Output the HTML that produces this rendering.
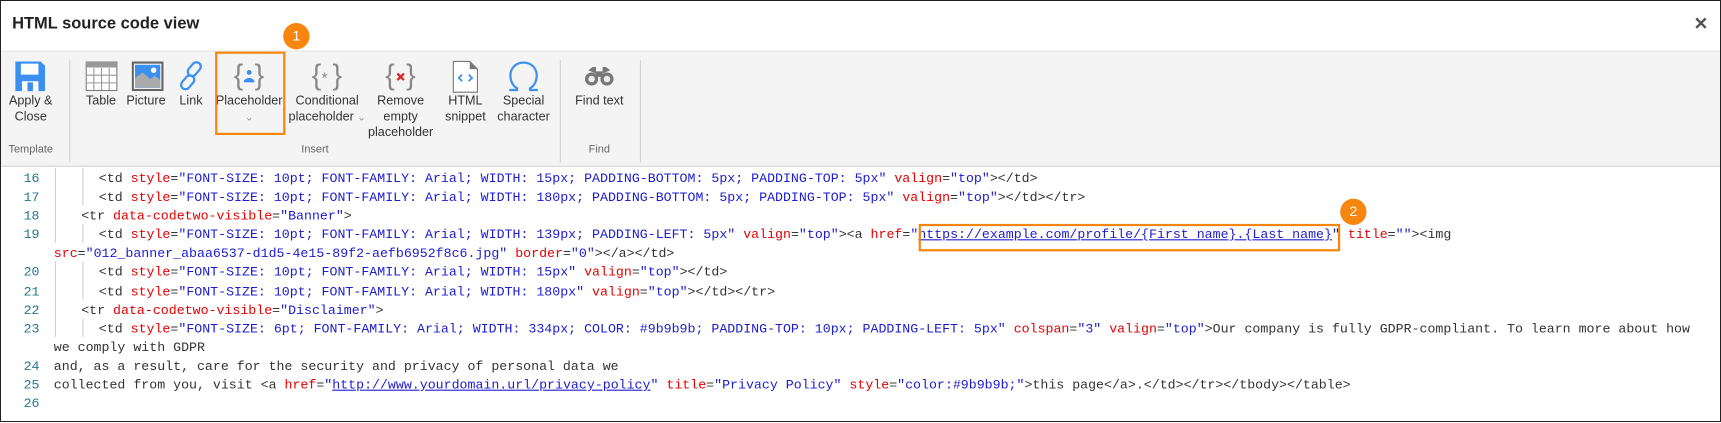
<!DOCTYPE html>
<html><head><meta charset="utf-8"><style>
*{margin:0;padding:0;box-sizing:border-box}
body{width:1721px;height:422px;overflow:hidden;background:#fff;font-family:"Liberation Sans",sans-serif;position:relative}
.wrap{position:absolute;left:0;top:0;width:1568px;height:385px;transform:scale(1.0976);transform-origin:0 0}
.frame{position:absolute;left:0;top:0;width:1721px;height:422px;border:1px solid #222;z-index:5}
.title{position:absolute;left:11px;top:13px;font-size:15px;font-weight:bold;color:#222}
.close{position:absolute;left:1543px;top:12px;font-size:16px;color:#555;font-weight:bold}
.tb{position:absolute;left:1px;top:46px;width:1567px;height:106px;background:#f4f4f4;border-top:1px solid #e6e6e6;border-bottom:1px solid #d6d6d6}
.sep{position:absolute;top:55px;width:1px;height:93px;background:#d0d0d0}
.btn{position:absolute;top:85px;font-size:11.5px;color:#333;text-align:center;line-height:14.5px;transform:translateX(-50%);white-space:nowrap}
.gl{position:absolute;top:131px;font-size:10px;color:#666;transform:translateX(-50%)}
.ic{position:absolute}
.code{position:absolute;left:0;top:153px;font-family:"Liberation Mono",monospace;font-size:12.08px;}
.ln{position:absolute;width:36px;text-align:right;color:#237893;left:0}
.l{position:absolute;white-space:pre;color:#333}
.a{color:#e50000}.v{color:#1c1cd0}.u{text-decoration:underline}
.bar{position:absolute;width:1px;background:#d0d0d0}
.badge{position:absolute;width:24px;height:24px;border-radius:50%;background:#f7860f;color:#fff;font-size:13px;text-align:center;line-height:24px}
.obox{position:absolute;border:2px solid #f7860f}
</style></head><body>
<div class="frame"></div>
<div class="wrap">
<div class="title">HTML source code view</div>
<div class="close">✕</div>
<div class="tb"></div>
<div class="sep" style="left:63px"></div>
<div class="sep" style="left:510px"></div>
<div class="sep" style="left:583px"></div>

<svg class="ic" style="left:13px;top:55px" width="29" height="29" viewBox="0 0 29 29"><path d="M1 1h23l4 4v23H1z" fill="#3b8ff0"/><rect x="6" y="3" width="16" height="10" fill="#fff"/><rect x="7" y="19" width="15" height="9" fill="#fff"/><rect x="12" y="20" width="5" height="8" fill="#3b8ff0"/></svg>
<svg class="ic" style="left:78px;top:56px" width="29" height="27" viewBox="0 0 29 27"><rect x="0.5" y="0.5" width="28" height="26" fill="#fff" stroke="#777"/><rect x="0.5" y="0.5" width="28" height="5" fill="#999"/><path d="M7.5 6v20M14.5 6v20M21.5 6v20M1 12.5h27M1 19.5h27" stroke="#999"/></svg>
<svg class="ic" style="left:120px;top:56px" width="29" height="27" viewBox="0 0 29 27"><rect x="1" y="1" width="27" height="25" fill="#fff" stroke="#666" stroke-width="2"/><rect x="3" y="3" width="23" height="21" fill="#3b8ff0"/><path d="M3 24V15l7-5 7 6 4-3 5 4v7z" fill="#aaa"/><circle cx="20" cy="8" r="2.5" fill="#fff"/></svg>
<svg class="ic" style="left:160px;top:55px" width="28" height="28" viewBox="0 0 28 28" fill="none" stroke="#3b8ff0" stroke-width="2"><rect x="13" y="1" width="8" height="14" rx="4" transform="rotate(40 17 8)"/><rect x="7" y="13" width="8" height="14" rx="4" transform="rotate(40 11 20)"/></svg>
<svg class="ic" style="left:212px;top:55px" width="30" height="30" viewBox="0 0 30 30"><text x="1" y="22" font-family="Liberation Sans" font-size="26" fill="#888">{</text><text x="20" y="22" font-family="Liberation Sans" font-size="26" fill="#888">}</text><circle cx="15" cy="11" r="2.2" fill="#3b8ff0"/><path d="M10 20a5 4 0 0 1 10 0z" fill="#3b8ff0"/></svg>
<svg class="ic" style="left:283px;top:55px" width="30" height="30" viewBox="0 0 30 30"><text x="1" y="22" font-family="Liberation Sans" font-size="26" fill="#888">{</text><text x="20" y="22" font-family="Liberation Sans" font-size="26" fill="#888">}</text><text x="10" y="21" font-family="Liberation Sans" font-size="14" fill="#888">*</text></svg>
<svg class="ic" style="left:350px;top:55px" width="30" height="30" viewBox="0 0 30 30"><text x="1" y="22" font-family="Liberation Sans" font-size="26" fill="#888">{</text><text x="20" y="22" font-family="Liberation Sans" font-size="26" fill="#888">}</text><path d="M12 12l6 6M18 12l-6 6" stroke="#e02020" stroke-width="2"/></svg>
<svg class="ic" style="left:412px;top:55px" width="24" height="30" viewBox="0 0 24 30"><path d="M1 1h15l7 7v21H1z" fill="#fff" stroke="#777"/><path d="M16 1v7h7z" fill="#777"/><path d="M9 13l-3 3 3 3M15 13l3 3-3 3" stroke="#3b8ff0" stroke-width="1.6" fill="none"/></svg>
<svg class="ic" style="left:462px;top:55px" width="30" height="30" viewBox="0 0 30 30" fill="none" stroke="#3b8ff0" stroke-width="2"><path d="M10 26C4 23 3 17 3 14 3 7 8 2 15 2s12 5 12 12c0 3-1 9-7 12"/><path d="M2 27h8M20 27h8"/></svg>
<svg class="ic" style="left:532px;top:60px" width="28" height="18" viewBox="0 0 28 18"><path d="M4 4l4-3h3v6M24 4l-4-3h-3v6" fill="#777"/><rect x="11" y="5" width="6" height="5" fill="#777"/><circle cx="7" cy="12" r="6" fill="#777"/><circle cx="21" cy="12" r="6" fill="#777"/><circle cx="7" cy="12" r="3" fill="#eee"/><circle cx="21" cy="12" r="3" fill="#eee"/></svg>

<div class="btn" style="left:28px">Apply &amp;<br>Close</div>
<div class="btn" style="left:92px">Table</div>
<div class="btn" style="left:133px">Picture</div>
<div class="btn" style="left:174px">Link</div>
<div class="btn" style="left:227px">Placeholder<br><span style="font-size:9px;color:#888">⌄</span></div>
<div class="btn" style="left:298px">Conditional<br>placeholder <span style="font-size:9px;color:#888">⌄</span></div>
<div class="btn" style="left:365px">Remove<br>empty<br>placeholder</div>
<div class="btn" style="left:424px">HTML<br>snippet</div>
<div class="btn" style="left:477px">Special<br>character</div>
<div class="btn" style="left:546px">Find text</div>
<div class="gl" style="left:28px">Template</div>
<div class="gl" style="left:287px">Insert</div>
<div class="gl" style="left:546px">Find</div>
<div class="obox" style="left:196px;top:47px;width:64px;height:76px"></div>
<div class="badge" style="left:258px;top:21px">1</div>

<div class="code">
<div class="bar" style="left:50px;top:0;height:68px"></div>
<div class="bar" style="left:75px;top:0;height:34px"></div>
<div class="bar" style="left:75px;top:51px;height:17px"></div>
<div class="bar" style="left:50px;top:85px;height:52px"></div>
<div class="bar" style="left:75px;top:85px;height:35px"></div>
<div class="bar" style="left:75px;top:137px;height:17px"></div>
<div class="bar" style="left:50px;top:137px;height:17px"></div>

<div class="ln" style="top:3px">16</div>
<div class="l" style="left:90px;top:3px">&lt;td <span class="a">style</span>=<span class="v">"FONT-SIZE: 10pt; FONT-FAMILY: Arial; WIDTH: 15px; PADDING-BOTTOM: 5px; PADDING-TOP: 5px"</span> <span class="a">valign</span>=<span class="v">"top"</span>&gt;&lt;/td&gt;</div>
<div class="ln" style="top:20px">17</div>
<div class="l" style="left:90px;top:20px">&lt;td <span class="a">style</span>=<span class="v">"FONT-SIZE: 10pt; FONT-FAMILY: Arial; WIDTH: 180px; PADDING-BOTTOM: 5px; PADDING-TOP: 5px"</span> <span class="a">valign</span>=<span class="v">"top"</span>&gt;&lt;/td&gt;&lt;/tr&gt;</div>
<div class="ln" style="top:37px">18</div>
<div class="l" style="left:74px;top:37px">&lt;tr <span class="a">data-codetwo-visible</span>=<span class="v">"Banner"</span>&gt;</div>
<div class="ln" style="top:54px">19</div>
<div class="l" style="left:90px;top:54px">&lt;td <span class="a">style</span>=<span class="v">"FONT-SIZE: 10pt; FONT-FAMILY: Arial; WIDTH: 139px; PADDING-LEFT: 5px"</span> <span class="a">valign</span>=<span class="v">"top"</span>&gt;&lt;a <span class="a">href</span>=<span class="v">"<span class="u">https://example.com/profile/{First name}.{Last name}</span>"</span> <span class="a">title</span>=<span class="v">""</span>&gt;&lt;img</div>
<div class="l" style="left:49px;top:71px"><span class="a">src</span>=<span class="v">"012_banner_abaa6537-d1d5-4e15-89f2-aefb6952f8c6.jpg"</span> <span class="a">border</span>=<span class="v">"0"</span>&gt;&lt;/a&gt;&lt;/td&gt;</div>
<div class="ln" style="top:88px">20</div>
<div class="l" style="left:90px;top:88px">&lt;td <span class="a">style</span>=<span class="v">"FONT-SIZE: 10pt; FONT-FAMILY: Arial; WIDTH: 15px"</span> <span class="a">valign</span>=<span class="v">"top"</span>&gt;&lt;/td&gt;</div>
<div class="ln" style="top:106px">21</div>
<div class="l" style="left:90px;top:106px">&lt;td <span class="a">style</span>=<span class="v">"FONT-SIZE: 10pt; FONT-FAMILY: Arial; WIDTH: 180px"</span> <span class="a">valign</span>=<span class="v">"top"</span>&gt;&lt;/td&gt;&lt;/tr&gt;</div>
<div class="ln" style="top:123px">22</div>
<div class="l" style="left:74px;top:123px">&lt;tr <span class="a">data-codetwo-visible</span>=<span class="v">"Disclaimer"</span>&gt;</div>
<div class="ln" style="top:140px">23</div>
<div class="l" style="left:90px;top:140px">&lt;td <span class="a">style</span>=<span class="v">"FONT-SIZE: 6pt; FONT-FAMILY: Arial; WIDTH: 334px; COLOR: #9b9b9b; PADDING-TOP: 10px; PADDING-LEFT: 5px"</span> <span class="a">colspan</span>=<span class="v">"3"</span> <span class="a">valign</span>=<span class="v">"top"</span>&gt;Our company is fully GDPR-compliant. To learn more about how</div>
<div class="l" style="left:49px;top:157px">we comply with GDPR</div>
<div class="ln" style="top:174px">24</div>
<div class="l" style="left:49px;top:174px">and, as a result, care for the security and privacy of personal data we</div>
<div class="ln" style="top:191px">25</div>
<div class="l" style="left:49px;top:191px">collected from you, visit &lt;a <span class="a">href</span>=<span class="v">"<span class="u">http://www.yourdomain.url/privacy-policy</span>"</span> <span class="a">title</span>=<span class="v">"Privacy Policy"</span> <span class="a">style</span>=<span class="v">"color:#9b9b9b;"</span>&gt;this page&lt;/a&gt;.&lt;/td&gt;&lt;/tr&gt;&lt;/tbody&gt;&lt;/table&gt;</div>
<div class="ln" style="top:208px">26</div>
</div>
<div class="obox" style="left:837px;top:204px;width:384px;height:25px"></div>
<div class="badge" style="left:1221px;top:181px">2</div>
</div>
</body></html>
